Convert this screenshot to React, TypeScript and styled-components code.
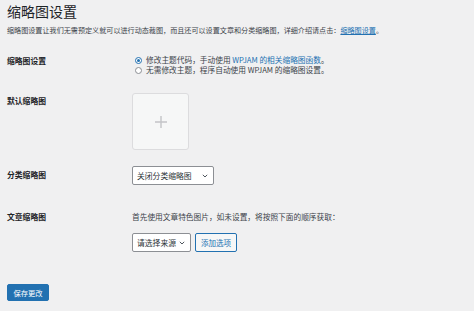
import React from 'react'
import styled, { createGlobalStyle } from 'styled-components'

const GlobalStyle = createGlobalStyle`
  html, body {
    margin: 0;
    padding: 0;
    background: #f0f0f1;
  }
  body {
    font-family: "Noto Sans CJK SC", "Noto Sans", sans-serif;
    color: #3c434a;
  }
`

const Page = styled.div`
  width: 474px;
  height: 311px;
  box-sizing: border-box;
  padding: 4px 7px 0;
  background: #f0f0f1;
`

const Title = styled.h1`
  margin: 0;
  font-size: 14px;
  line-height: 14px;
  font-weight: 400;
  color: #1d2327;
`

const Intro = styled.p`
  margin: 7px 0 0;
  font-size: 7.1px;
  line-height: 10px;
  color: #3c434a;
`

const Link = styled.a`
  color: #2271b1;
  text-decoration: underline;
`

const Row = styled.div<{ $top: number }>`
  display: flex;
  align-items: flex-start;
  margin-top: ${p => p.$top}px;
`

const Label = styled.div<{ $offset?: number }>`
  width: 125px;
  flex: none;
  margin-top: ${p => p.$offset || 0}px;
  font-size: 7.8px;
  line-height: 10px;
  font-weight: 700;
  color: #1d2327;
`

const Field = styled.div`
  display: flex;
  flex-direction: column;
  font-size: 7.7px;
  line-height: 10px;
`

const Choice = styled.label`
  display: flex;
  align-items: center;
  gap: 4px;
  color: #3c434a;
`

const Radio = styled.span<{ $checked?: boolean }>`
  width: 7px;
  height: 7px;
  margin-left: 3px;
  box-sizing: border-box;
  border-radius: 50%;
  border: 1px solid ${p => (p.$checked ? '#2271b1' : '#8c8f94')};
  background: #fff;
  display: flex;
  align-items: center;
  justify-content: center;
  &::after {
    content: '';
    width: 3px;
    height: 3px;
    border-radius: 50%;
    background: ${p => (p.$checked ? '#2271b1' : 'transparent')};
  }
`

const Blue = styled.span`
  color: #2271b1;
`

const ImageBox = styled.div`
  width: 57px;
  height: 57px;
  box-sizing: border-box;
  border: 1px solid #dcdcde;
  border-radius: 3px;
  background: #f6f7f7;
  display: flex;
  align-items: center;
  justify-content: center;
`

const Select = styled.div<{ $width: number }>`
  width: ${p => p.$width}px;
  height: 19px;
  box-sizing: border-box;
  padding: 0 5px 0 4px;
  border: 1px solid #8c8f94;
  border-radius: 2px;
  background: #fff;
  display: flex;
  align-items: center;
  justify-content: space-between;
  font-size: 7.8px;
  color: #2c3338;
`

const Controls = styled.div`
  display: flex;
  gap: 4px;
  margin-top: 11px;
`

const SecondaryButton = styled.button`
  width: 42px;
  height: 19px;
  box-sizing: border-box;
  padding: 0;
  border: 1px solid #2271b1;
  border-radius: 2px;
  background: #f6f7f7;
  color: #2271b1;
  font-family: inherit;
  font-size: 7.5px;
`

const PrimaryButton = styled.button`
  margin-top: 32px;
  width: 42px;
  height: 17px;
  box-sizing: border-box;
  padding: 0;
  border: 1px solid #2271b1;
  border-radius: 2px;
  background: #2271b1;
  color: #fff;
  font-family: inherit;
  font-size: 7.3px;
`

const Chevron = () => (
  <svg width="6" height="4" viewBox="0 0 6 4" fill="none">
    <path d="M0.8 0.8 L3 3 L5.2 0.8" stroke="#50575e" strokeWidth="1" />
  </svg>
)

const Plus = () => (
  <svg width="12" height="12" viewBox="0 0 12 12">
    <path d="M6 0 V12 M0 6 H12" stroke="#c3c4c7" strokeWidth="1.4" />
  </svg>
)

export default function App() {
  return (
    <Page>
      <GlobalStyle />
      <Title>缩略图设置</Title>
      <Intro>
        缩略图设置让我们无需预定义就可以进行动态裁图，而且还可以设置文章和分类缩略图，详细介绍请点击：
        <Link>缩略图设置</Link>。
      </Intro>

      <Row $top={20}>
        <Label $offset={1}>缩略图设置</Label>
        <Field>
          <Choice>
            <Radio $checked />
            <span>
              修改主题代码，手动使用 <Blue>WPJAM 的相关缩略图函数</Blue>。
            </span>
          </Choice>
          <Choice>
            <Radio />
            <span>无需修改主题，程序自动使用 WPJAM 的缩略图设置。</span>
          </Choice>
        </Field>
      </Row>

      <Row $top={18}>
        <Label $offset={3}>默认缩略图</Label>
        <ImageBox>
          <Plus />
        </ImageBox>
      </Row>

      <Row $top={16}>
        <Label $offset={4}>分类缩略图</Label>
        <Select $width={82}>
          <span>关闭分类缩略图</span>
          <Chevron />
        </Select>
      </Row>

      <Row $top={27}>
        <Label>文章缩略图</Label>
        <Field>
          <span>首先使用文章特色图片，如未设置，将按照下面的顺序获取：</span>
          <Controls>
            <Select $width={59}>
              <span>请选择来源</span>
              <Chevron />
            </Select>
            <SecondaryButton>添加选项</SecondaryButton>
          </Controls>
        </Field>
      </Row>

      <PrimaryButton>保存更改</PrimaryButton>
    </Page>
  )
}
